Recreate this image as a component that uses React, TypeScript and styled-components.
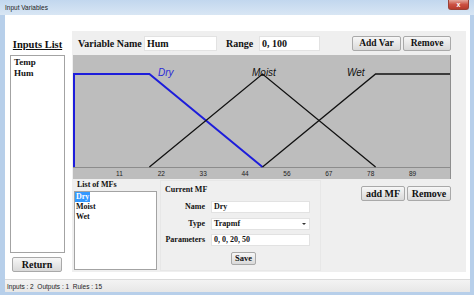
import React from "react";
import styled, { createGlobalStyle } from "styled-components";

const GlobalStyle = createGlobalStyle`
  html, body { margin: 0; padding: 0; background: #fff; }
  body { width: 474px; height: 295px; overflow: hidden; font-family: "Liberation Serif", serif; }
  * { box-sizing: border-box; }
`;

const Window = styled.div`
  width: 474px;
  height: 295px;
  display: flex;
  flex-direction: column;
  background: #b7cfea;
`;

const TitleBar = styled.div`
  height: 15px;
  flex: none;
  display: flex;
  align-items: flex-start;
  padding-left: 5px;
  background: linear-gradient(#c2d7ee, #d8e6f4);
`;

const Title = styled.span`
  font: 6.5px/15px "Liberation Sans", sans-serif;
  color: #222;
`;

const CloseButton = styled.div`
  margin-left: auto;
  margin-right: 5px;
  width: 21px;
  height: 10px;
  background: linear-gradient(#e4a79c, #cc5143 50%, #b73a2c);
  border: 1px solid #9a4136;
  border-top: none;
  border-radius: 0 0 3px 3px;
  color: #fff;
  font: bold 7px/9px "Liberation Sans", sans-serif;
  text-align: center;
`;

const Frame = styled.div`
  flex: 1;
  display: flex;
  padding: 0 6px 4px 5px;
`;

const Client = styled.div`
  flex: 1;
  display: flex;
  flex-direction: column;
  background: #fff;
`;

const Main = styled.div`
  height: 264px;
  flex: none;
  display: flex;
  gap: 7px;
  padding: 16px 4px 7px 5px;
`;

const LeftColumn = styled.div`
  width: 55px;
  display: flex;
  flex-direction: column;
  padding-top: 8px;
`;

const SectionTitle = styled.div`
  font: bold 10.5px/12px "Liberation Serif", serif;
  text-decoration: underline;
  color: #111;
  text-align: center;
`;

const ListBox = styled.div<{ $h: number }>`
  height: ${(p) => p.$h}px;
  background: #fff;
  border: 1px solid #a3a3a3;
  display: flex;
  flex-direction: column;
  align-items: flex-start;
`;

const InputsListBox = styled(ListBox)`
  margin-top: 4px;
  padding: 1px 2px;
`;

const ListItem = styled.span<{ $selected?: boolean; $size: number; $lh: number }>`
  font: bold ${(p) => p.$size}px/${(p) => p.$lh}px "Liberation Serif", serif;
  color: ${(p) => (p.$selected ? "#fff" : "#111")};
  background: ${(p) => (p.$selected ? "#3399ff" : "transparent")};
  padding: 0 1px;
`;

const Button = styled.div<{ $w: number; $h: number; $size?: number }>`
  width: ${(p) => p.$w}px;
  height: ${(p) => p.$h}px;
  flex: none;
  display: flex;
  align-items: center;
  justify-content: center;
  background: linear-gradient(#f7f7f7, #e8e8e8 50%, #d9d9d9);
  border: 1px solid #a9a9a9;
  border-radius: 2px;
  font: bold ${(p) => p.$size ?? 10}px/1 "Liberation Serif", serif;
  color: #111;
`;

const ReturnButton = styled(Button)`
  margin: 4px 0 0 2px;
`;

const EditorPanel = styled.div`
  flex: 1;
  background: #efefef;
  display: flex;
  flex-direction: column;
  padding: 5px 15px 0 1px;
`;

const TopRow = styled.div`
  height: 15px;
  display: flex;
  align-items: center;
  padding-left: 5px;
`;

const RowLabel = styled.span<{ $w: number; $ml?: number }>`
  width: ${(p) => p.$w}px;
  margin-left: ${(p) => p.$ml ?? 0}px;
  flex: none;
  font: bold 10px/15px "Liberation Serif", serif;
  color: #111;
  white-space: nowrap;
`;

const TextField = styled.div<{ $w: number; $h: number; $size: number }>`
  width: ${(p) => p.$w}px;
  height: ${(p) => p.$h}px;
  flex: none;
  display: flex;
  align-items: center;
  justify-content: space-between;
  background: #fff;
  border: 1px solid #e2e2e2;
  padding: 0 3px 0 2px;
  font: bold ${(p) => p.$size}px/1 "Liberation Serif", serif;
  color: #111;
  white-space: nowrap;
`;

const ButtonGroup = styled.div<{ $mt?: number }>`
  margin-left: auto;
  margin-top: ${(p) => p.$mt ?? 0}px;
  display: flex;
  gap: 2px;
  align-self: flex-start;
`;

const ChartBox = styled.div`
  margin-top: 4px;
  width: 378px;
  height: 124px;
  background: #bdbdbd;
  border-right: 1px solid #8e8e8e;
  svg { display: block; }
`;

const BottomRow = styled.div`
  flex: 1;
  display: flex;
`;

const MFColumn = styled.div`
  width: 83px;
  margin-left: 1px;
  padding-top: 1px;
  display: flex;
  flex-direction: column;
`;

const SmallTitle = styled.div<{ $pl?: number }>`
  font: bold 8px/10px "Liberation Serif", serif;
  color: #111;
  padding-left: ${(p) => p.$pl ?? 0}px;
`;

const MFListBox = styled(ListBox)`
  margin-top: 1px;
`;

const Group = styled.div`
  width: 161px;
  height: 91px;
  margin: 1px 0 0 3px;
  border: 1px solid #e7e7e7;
  padding: 4px 0 0 4px;
  display: flex;
  flex-direction: column;
`;

const FormRows = styled.div`
  margin-top: 6px;
  display: flex;
  flex-direction: column;
  gap: 4.5px;
`;

const FormRow = styled.div`
  display: flex;
  align-items: center;
  gap: 6px;
`;

const FormLabel = styled.span`
  width: 40px;
  text-align: right;
  font: bold 8px/12px "Liberation Serif", serif;
  color: #111;
  white-space: nowrap;
`;

const Arrow = styled.span`
  width: 0;
  height: 0;
  border-left: 2px solid transparent;
  border-right: 2px solid transparent;
  border-top: 2.5px solid #333;
`;

const SaveButton = styled(Button)`
  margin: 6px 0 0 66px;
`;

const StatusBar = styled.div`
  flex: 1;
  background: linear-gradient(#f3f3f3, #e7e7e7);
  border-top: 1px solid #dadada;
  padding: 2px 0 0 2px;
  font: 6.5px/10px "Liberation Sans", sans-serif;
  color: #222;
  white-space: pre;
`;

const AXIS = 112;
const TOP = 19;
const xv = (v: number) => 1 + v * 3.77;
const pts = (arr: [number, number][]) =>
  arr.map(([v, m]) => `${xv(v).toFixed(1)},${(AXIS - m * (AXIS - TOP)).toFixed(1)}`).join(" ");

const mfs = [
  { name: "Dry", points: [[0, 0], [0, 1], [20, 1], [50, 0]] as [number, number][], color: "#1d1ddb", label: "#2a2ad8", width: 2, lx: 85 },
  { name: "Moist", points: [[20, 0], [50, 1], [80, 0]] as [number, number][], color: "#111", label: "#111", width: 1.3, lx: 179 },
  { name: "Wet", points: [[50, 0], [80, 1], [100, 1]] as [number, number][], color: "#111", label: "#111", width: 1.3, lx: 274 },
];

const ticks = [11, 22, 33, 44, 56, 67, 78, 89];

function Chart() {
  return (
    <ChartBox>
      <svg width={377} height={124} viewBox="0 0 377 124">
        <line x1={0} y1={AXIS + 0.5} x2={377} y2={AXIS + 0.5} stroke="#8c8c8c" strokeWidth={1} />
        {mfs.map((m) => (
          <polyline key={m.name} points={pts(m.points)} fill="none" stroke={m.color} strokeWidth={m.width} />
        ))}
        {mfs.map((m) => (
          <text
            key={m.name + "l"}
            x={m.lx}
            y={20.5}
            fontFamily="Liberation Sans, sans-serif"
            fontStyle="italic"
            fontSize={10}
            fill={m.label}
          >
            {m.name}
          </text>
        ))}
        {ticks.map((t, i) => (
          <text
            key={t}
            x={xv((100 / 9) * (i + 1)) + 3.5}
            y={121}
            textAnchor="middle"
            fontFamily="Liberation Sans, sans-serif"
            fontSize={6.5}
            fill="#222"
          >
            {t}
          </text>
        ))}
      </svg>
    </ChartBox>
  );
}

export default function App() {
  return (
    <>
      <GlobalStyle />
      <Window>
        <TitleBar>
          <Title>Input Variables</Title>
          <CloseButton>x</CloseButton>
        </TitleBar>
        <Frame>
          <Client>
            <Main>
              <LeftColumn>
                <SectionTitle>Inputs List</SectionTitle>
                <InputsListBox $h={198}>
                  <ListItem $size={9} $lh={11}>Temp</ListItem>
                  <ListItem $size={9} $lh={11}>Hum</ListItem>
                </InputsListBox>
                <ReturnButton $w={50} $h={15}>Return</ReturnButton>
              </LeftColumn>
              <EditorPanel>
                <TopRow>
                  <RowLabel $w={66}>Variable Name</RowLabel>
                  <TextField $w={73} $h={15} $size={10}>Hum</TextField>
                  <RowLabel $w={33} $ml={9}>Range</RowLabel>
                  <TextField $w={61} $h={15} $size={10}>0, 100</TextField>
                  <ButtonGroup>
                    <Button $w={49} $h={15} $size={9.5}>Add Var</Button>
                    <Button $w={48} $h={15} $size={9.5}>Remove</Button>
                  </ButtonGroup>
                </TopRow>
                <Chart />
                <BottomRow>
                  <MFColumn>
                    <SmallTitle $pl={3}>List of MFs</SmallTitle>
                    <MFListBox $h={79}>
                      <ListItem $size={8} $lh={10} $selected>Dry</ListItem>
                      <ListItem $size={8} $lh={10}>Moist</ListItem>
                      <ListItem $size={8} $lh={10}>Wet</ListItem>
                    </MFListBox>
                  </MFColumn>
                  <Group>
                    <SmallTitle>Current MF</SmallTitle>
                    <FormRows>
                      <FormRow>
                        <FormLabel>Name</FormLabel>
                        <TextField $w={99} $h={12} $size={8}>Dry</TextField>
                      </FormRow>
                      <FormRow>
                        <FormLabel>Type</FormLabel>
                        <TextField $w={99} $h={12} $size={8}>
                          Trapmf
                          <Arrow />
                        </TextField>
                      </FormRow>
                      <FormRow>
                        <FormLabel>Parameters</FormLabel>
                        <TextField $w={99} $h={12} $size={8}>0, 0, 20, 50</TextField>
                      </FormRow>
                    </FormRows>
                    <SaveButton $w={25} $h={13} $size={8.5}>Save</SaveButton>
                  </Group>
                  <ButtonGroup $mt={7}>
                    <Button $w={44} $h={15}>add MF</Button>
                    <Button $w={44} $h={15}>Remove</Button>
                  </ButtonGroup>
                </BottomRow>
              </EditorPanel>
            </Main>
            <StatusBar>{"Inputs : 2  Outputs : 1  Rules : 15"}</StatusBar>
          </Client>
        </Frame>
      </Window>
    </>
  );
}
